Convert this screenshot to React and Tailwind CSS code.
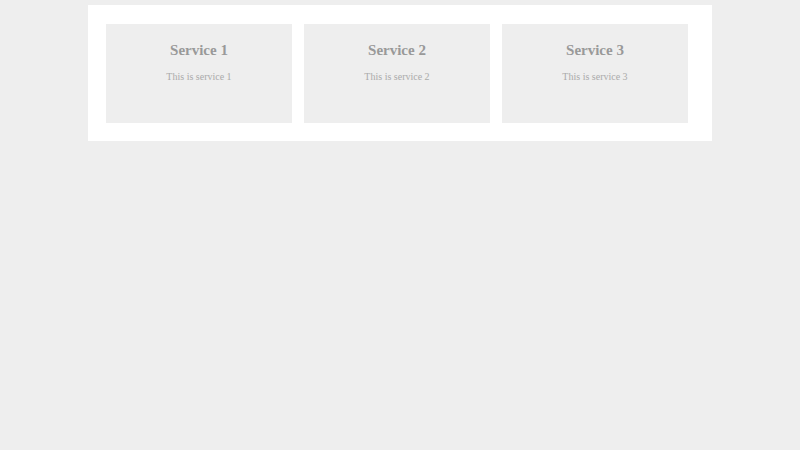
import React from "react";

const services = [
  { id: 1, title: "Service 1", text: "This is service 1" },
  { id: 2, title: "Service 2", text: "This is service 2" },
  { id: 3, title: "Service 3", text: "This is service 3" },
];

export default function App() {
  return (
    <div className="min-h-[450px] w-full bg-[#eeeeee] pt-[5px] font-['Liberation_Serif',serif]">
      <div className="ml-[88px] w-[624px] bg-white pb-[18px] pl-[18px] pr-[24px] pt-[19px]">
        <div className="flex gap-[12px]">
          {services.map((s) => (
            <div key={s.id} className="h-[99px] w-[186px] bg-[#eeeeee] pt-[17px] text-center">
              <h2 className="text-[15px] font-bold leading-[18px] text-[#999999]">{s.title}</h2>
              <p className="mt-[11px] text-[10px] leading-[14px] text-[#aaaaaa]">{s.text}</p>
            </div>
          ))}
        </div>
      </div>
    </div>
  );
}
